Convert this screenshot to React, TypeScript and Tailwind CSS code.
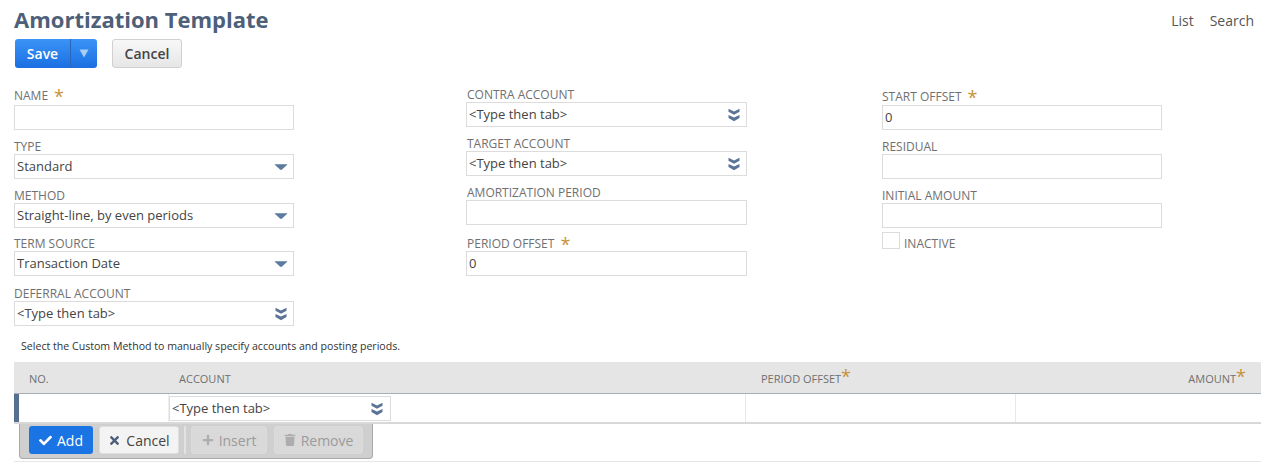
import { FaCheck, FaPlus, FaTimes, FaTrash } from "react-icons/fa";

function DoubleChevron() {
  return (
    <svg width="14" height="14" viewBox="0 0 14 14" className="shrink-0">
      <path d="M1.5 0.8 L7 3.4 L12.5 0.8 V3.8 L7 6.8 L1.5 3.8 Z" fill="#5a7397" />
      <path d="M1.5 7 L7 9.6 L12.5 7 V10 L7 13.2 L1.5 10 Z" fill="#5a7397" />
    </svg>
  );
}

function Caret() {
  return (
    <svg width="14" height="8" viewBox="0 0 14 8" className="shrink-0">
      <path d="M1 1.2 H13 Q13.6 1.2 13.2 1.8 L8 6.6 Q7 7.4 6 6.6 L0.8 1.8 Q0.4 1.2 1 1.2 Z" fill="#5a7a9e" />
    </svg>
  );
}

function Star({ className = "" }: { className?: string }) {
  return <span className={`text-[#c8923a] ${className}`}>*</span>;
}

function Field({
  label,
  value,
  required,
  icon,
  labelClass = "h-[18px] pt-[4px]",
  className = "",
}: {
  label: string;
  value?: string;
  required?: boolean;
  icon?: "caret" | "lookup";
  labelClass?: string;
  className?: string;
}) {
  return (
    <div className={className}>
      <div className={`${labelClass} flex items-center text-[12px] leading-none text-[#707070]`}>
        {label}
        {required && <Star className="ml-[6px] text-[18px] leading-none" />}
      </div>
      <div className="flex h-[25px] items-center justify-between border border-[#dcdcdc] pl-[2px] pr-[5px] text-[13px] text-[#444]">
        <span>{value}</span>
        {icon === "caret" && <Caret />}
        {icon === "lookup" && <DoubleChevron />}
      </div>
    </div>
  );
}

function ToolButton({
  icon,
  label,
  className,
}: {
  icon: React.ReactNode;
  label: string;
  className: string;
}) {
  return (
    <div className={`flex h-[28px] items-center justify-center gap-[5px] rounded-[3px] text-[14px] font-medium ${className}`}>
      {icon}
      {label}
    </div>
  );
}

export default function App() {
  return (
    <div className="h-[465px] overflow-hidden bg-white pl-[14px] pr-[19px] font-['Open_Sans',sans-serif]">
      {/* Title bar */}
      <div className="flex h-[39px] items-start justify-between">
        <h1 className="mt-[4px] text-[22px] font-bold leading-[30px] text-[#4d5f79]">Amortization Template</h1>
        <div className="mt-[11px] flex gap-[16px] pr-[7px] text-[14px] leading-[19px] text-[#555]">
          <span>List</span>
          <span>Search</span>
        </div>
      </div>

      {/* Buttons */}
      <div className="ml-px flex h-[29px] gap-[15px]">
        <div className="flex w-[82px] rounded-[3px] bg-gradient-to-b from-[#3a94f6] to-[#1b6fe2] text-white">
          <div className="flex w-[56px] items-center justify-center border-r border-[#2a66b8] text-[14px] font-semibold">Save</div>
          <div className="flex flex-1 items-center justify-center">
            <svg width="10" height="9" viewBox="0 0 10 9">
              <path d="M0.5 0.5 H9.5 L5 8.5 Z" fill="#a9cdf5" />
            </svg>
          </div>
        </div>
        <div className="flex w-[70px] items-center justify-center rounded-[3px] border border-[#d0d0d0] bg-gradient-to-b from-[#f8f8f8] to-[#e6e6e6] text-[14px] font-semibold text-[#444]">
          Cancel
        </div>
      </div>

      {/* Form columns */}
      <div className="mt-[19px] flex h-[239px]">
        <div className="flex w-[280px] flex-col gap-[6px]">
          <Field label="NAME" required labelClass="h-[18px]" />
          <Field label="TYPE" value="Standard" icon="caret" />
          <Field label="METHOD" value="Straight-line, by even periods" icon="caret" />
          <Field label="TERM SOURCE" value="Transaction Date" icon="caret" labelClass="h-[17px] pt-[2px]" />
          <Field label="DEFERRAL ACCOUNT" value="<Type then tab>" icon="lookup" labelClass="h-[19px] pt-[4px]" />
        </div>
        <div className="ml-[172px] flex w-[281px] flex-col gap-[6px]">
          <Field label="CONTRA ACCOUNT" value="<Type then tab>" icon="lookup" labelClass="h-[15px] pl-px" />
          <Field label="TARGET ACCOUNT" value="<Type then tab>" icon="lookup" labelClass="h-[18px] pl-px pt-[4px]" />
          <Field label="AMORTIZATION PERIOD" labelClass="h-[18px] pl-px pt-[4px]" />
          <Field label="PERIOD OFFSET" value="0" required labelClass="h-[20px] pl-px pt-[6px]" />
        </div>
        <div className="ml-[135px] flex w-[280px] flex-col gap-[6px]">
          <Field label="START OFFSET" value="0" required labelClass="h-[18px] pt-[2px]" />
          <Field label="RESIDUAL" />
          <Field label="INITIAL AMOUNT" />
          <div className="-mt-[2px] flex items-start">
            <div className="h-[17px] w-[18px] border border-[#dcdcdc]" />
            <span className="ml-[4px] mt-[4px] text-[12px] leading-[16px] text-[#707070]">INACTIVE</span>
          </div>
        </div>
      </div>

      <p className="mt-[12px] h-[16px] pl-[7px] text-[10.6px] leading-[16px] text-[#333]">
        Select the Custom Method to manually specify accounts and posting periods.
      </p>

      {/* Line items */}
      <div className="mt-[8px] border-b border-[#e6e6e6] pb-[2px]">
        <div className="flex h-[32px] items-center border-b border-[#a8aeb6] bg-[#e5e5e5] pt-[3px] text-[11px] text-[#707070]">
          <div className="w-[165px] pl-[15px]">NO.</div>
          <div className="w-[581px]">ACCOUNT</div>
          <div className="-mt-[4px] w-[250px] pl-px">
            PERIOD OFFSET<Star className="text-[18px] leading-none" />
          </div>
          <div className="-mt-[4px] flex-1 pr-[15px] text-right">
            AMOUNT<Star className="text-[18px] leading-none" />
          </div>
        </div>
        <div className="flex h-[30px] border-b-2 border-[#d8d8d8]">
          <div className="w-[154px] border-l-[5px] border-[#56708f]" />
          <div className="flex w-[577px] border-l border-[#eeeeee]">
            <div className="mt-[2px] flex h-[25px] w-[222px] items-center justify-between border border-[#dcdcdc] pl-[2px] pr-[6px] text-[13px] text-[#444]">
              &lt;Type then tab&gt;
              <DoubleChevron />
            </div>
          </div>
          <div className="w-[270px] border-l border-[#e8e8e8]" />
          <div className="flex-1 border-l border-[#e8e8e8]" />
        </div>
        <div className="ml-[5px] flex h-[35px] w-[354px] items-start rounded-b-[4px] border border-t-0 border-[#a9a9a9] bg-[#cfcfcf] pl-[9px] pt-[2px]">
          <ToolButton
            icon={<FaCheck size={13} />}
            label="Add"
            className="w-[64px] bg-[#1b74e4] text-white"
          />
          <ToolButton
            icon={<FaTimes size={13} className="text-[#4d5f79]" />}
            label="Cancel"
            className="ml-[6px] w-[80px] border border-[#dedede] bg-[#f3f3f3] text-[#444]"
          />
          <div className="ml-[5px] h-[28px] w-[2px] bg-[#e2e2e2]" />
          <ToolButton
            icon={<FaPlus size={12} className="text-[#adadad]" />}
            label="Insert"
            className="ml-[5px] w-[76px] border border-[#dcdcdc] bg-[#d9d9d9] text-[#9b9b9b]"
          />
          <ToolButton
            icon={<FaTrash size={12} className="text-[#adadad]" />}
            label="Remove"
            className="ml-[7px] w-[89px] border border-[#dcdcdc] bg-[#d9d9d9] text-[#9b9b9b]"
          />
        </div>
      </div>
    </div>
  );
}
